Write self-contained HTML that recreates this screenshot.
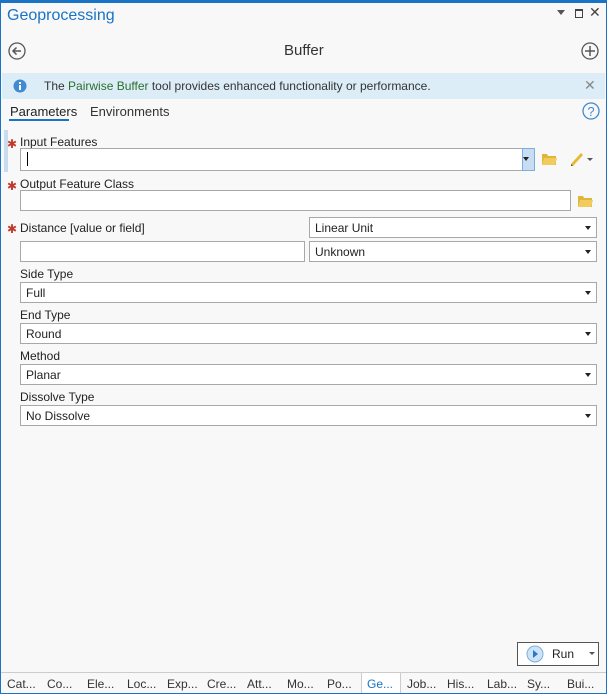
<!DOCTYPE html><html><head><style>
*{box-sizing:border-box;margin:0;padding:0}
body{width:607px;height:694px;background:#f8f8f8;font-family:"Liberation Sans",sans-serif;font-size:12px;color:#222;position:relative;overflow:hidden}
.a{position:absolute}
.box{position:absolute;background:#fff;border:1px solid #a8a8a8;height:21px;padding:3px 5px;font-size:12px}
.dd::after{content:"";position:absolute;right:5px;top:8px;border:3px solid transparent;border-top:4px solid #222}
.lbl{position:absolute;left:20px;font-size:12px;color:#222}
.star{position:absolute;left:7px;color:#c0392b;font-size:12px}
.tab{position:absolute;top:677px;font-size:12px;color:#333}
</style></head><body>
<div class="a" style="left:0;top:0;width:607px;height:694px;border:1px solid #1a73c4;border-top:3px solid #1a73c4"></div>
<div class="a" style="left:7px;top:7px;font-size:16px;color:#1a73c4">Geoprocessing</div>
<div class="a" style="left:557px;top:10px;border:4px solid transparent;border-top:5px solid #555"></div>
<div class="a" style="left:575px;top:9px;width:8px;height:9px;border:1px solid #444;border-top:2px solid #444"></div>
<div class="a" style="left:589px;top:4px;font-size:14px;color:#444">✕</div>
<svg class="a" style="left:8px;top:42px" width="18" height="18"><circle cx="9" cy="9" r="8" fill="none" stroke="#555" stroke-width="1.3"/><path d="M13 9H5M8.5 5.5 5 9l3.5 3.5" fill="none" stroke="#555" stroke-width="1.5"/></svg>
<div class="a" style="left:284px;top:42px;font-size:15px;color:#333">Buffer</div>
<svg class="a" style="left:581px;top:42px" width="18" height="18"><circle cx="9" cy="9" r="8" fill="none" stroke="#555" stroke-width="1.3"/><path d="M9 4v10M4 9h10" stroke="#555" stroke-width="1.5"/></svg>
<div class="a" style="left:2px;top:73px;width:603px;height:26px;background:#ddedf8"></div>
<svg class="a" style="left:13px;top:79px" width="14" height="14"><circle cx="7" cy="7" r="6.5" fill="#3f8ad0"/><rect x="6" y="6" width="2" height="5" fill="#fff"/><rect x="6" y="3" width="2" height="2" fill="#fff"/></svg>
<div class="a" style="left:44px;top:79px;font-size:12px;color:#333">The <span style="color:#2c6e2c">Pairwise Buffer</span> tool provides enhanced functionality or performance.</div>
<div class="a" style="left:584px;top:77px;font-size:14px;color:#888">✕</div>
<div class="a" style="left:10px;top:104px;font-size:13px;color:#222">Parameters</div>
<div class="a" style="left:9px;top:119px;width:60px;height:2px;background:#1a73c4"></div>
<div class="a" style="left:90px;top:104px;font-size:13px;color:#333">Environments</div>
<svg class="a" style="left:582px;top:102px" width="18" height="18"><circle cx="9" cy="9" r="8" fill="none" stroke="#3f8ad0" stroke-width="1.3"/><text x="9" y="14" text-anchor="middle" font-size="13" fill="#3f8ad0" font-family="Liberation Sans">?</text></svg>
<div class="a" style="left:4px;top:130px;width:4px;height:42px;background:#c9dcef"></div>
<div class="star" style="top:137px">✱</div><div class="lbl" style="top:135px">Input Features</div>
<div class="box" style="left:20px;top:148px;width:503px;height:23px"><span style="display:inline-block;width:1px;height:14px;background:#000;margin-left:1px"></span></div>
<div class="a dd" style="left:522px;top:148px;width:13px;height:23px;background:#c7ddf2;border:1px solid #7aaee0"></div>
<svg class="a" style="left:541px;top:152px" width="17" height="14"><path d="M1 2h5l1 2h8v9H1z" fill="#e0b53a"/><path d="M3 6h13l-2 7H1z" fill="#f0cc5c"/></svg>
<svg class="a" style="left:568px;top:150px" width="16" height="17"><path d="M3 14 13 3l2 2L5 16H3z" fill="#e8b830"/><path d="M3 14v2h2z" fill="#555"/></svg>
<div class="a" style="left:587px;top:158px;border:3px solid transparent;border-top:3px solid #555"></div>
<div class="star" style="top:179px">✱</div><div class="lbl" style="top:177px">Output Feature Class</div>
<div class="box" style="left:20px;top:190px;width:551px"></div>
<svg class="a" style="left:577px;top:194px" width="17" height="14"><path d="M1 2h5l1 2h8v9H1z" fill="#e0b53a"/><path d="M3 6h13l-2 7H1z" fill="#f0cc5c"/></svg>
<div class="star" style="top:222px">✱</div><div class="lbl" style="top:221px">Distance [value or field]</div>
<div class="box dd" style="left:309px;top:217px;width:288px">Linear Unit</div>
<div class="box" style="left:20px;top:241px;width:285px"></div>
<div class="box dd" style="left:309px;top:241px;width:288px">Unknown</div>
<div class="lbl" style="top:267px">Side Type</div>
<div class="box dd" style="left:20px;top:282px;width:577px">Full</div>
<div class="lbl" style="top:308px">End Type</div>
<div class="box dd" style="left:20px;top:323px;width:577px">Round</div>
<div class="lbl" style="top:349px">Method</div>
<div class="box dd" style="left:20px;top:364px;width:577px">Planar</div>
<div class="lbl" style="top:390px">Dissolve Type</div>
<div class="box dd" style="left:20px;top:405px;width:577px">No Dissolve</div>
<div class="a" style="left:517px;top:642px;width:82px;height:24px;border:1px solid #555;background:#fff"></div>
<svg class="a" style="left:526px;top:645px" width="18" height="18"><circle cx="9" cy="9" r="8" fill="#cfe3f6" stroke="#7ab0e0"/><path d="M7 5l5 4-5 4z" fill="#2a78c8"/></svg>
<div class="a" style="left:552px;top:647px;font-size:12px">Run</div>
<div class="a" style="left:589px;top:652px;border:3px solid transparent;border-top:3px solid #555"></div>
<div class="a" style="left:1px;top:672px;width:605px;height:1px;background:#ccc"></div>
<div class="a" style="left:361px;top:672px;width:40px;height:21px;background:#fff;border:1px solid #ccc;border-bottom:none"></div>
<div class="tab" style="left:7px">Cat...</div><div class="tab" style="left:47px">Co...</div><div class="tab" style="left:87px">Ele...</div><div class="tab" style="left:127px">Loc...</div><div class="tab" style="left:167px">Exp...</div><div class="tab" style="left:207px">Cre...</div><div class="tab" style="left:247px">Att...</div><div class="tab" style="left:287px">Mo...</div><div class="tab" style="left:327px">Po...</div><div class="tab" style="left:367px;color:#1a73c4">Ge...</div><div class="tab" style="left:407px">Job...</div><div class="tab" style="left:447px">His...</div><div class="tab" style="left:487px">Lab...</div><div class="tab" style="left:527px">Sy...</div><div class="tab" style="left:567px">Bui...</div>
</body></html>
